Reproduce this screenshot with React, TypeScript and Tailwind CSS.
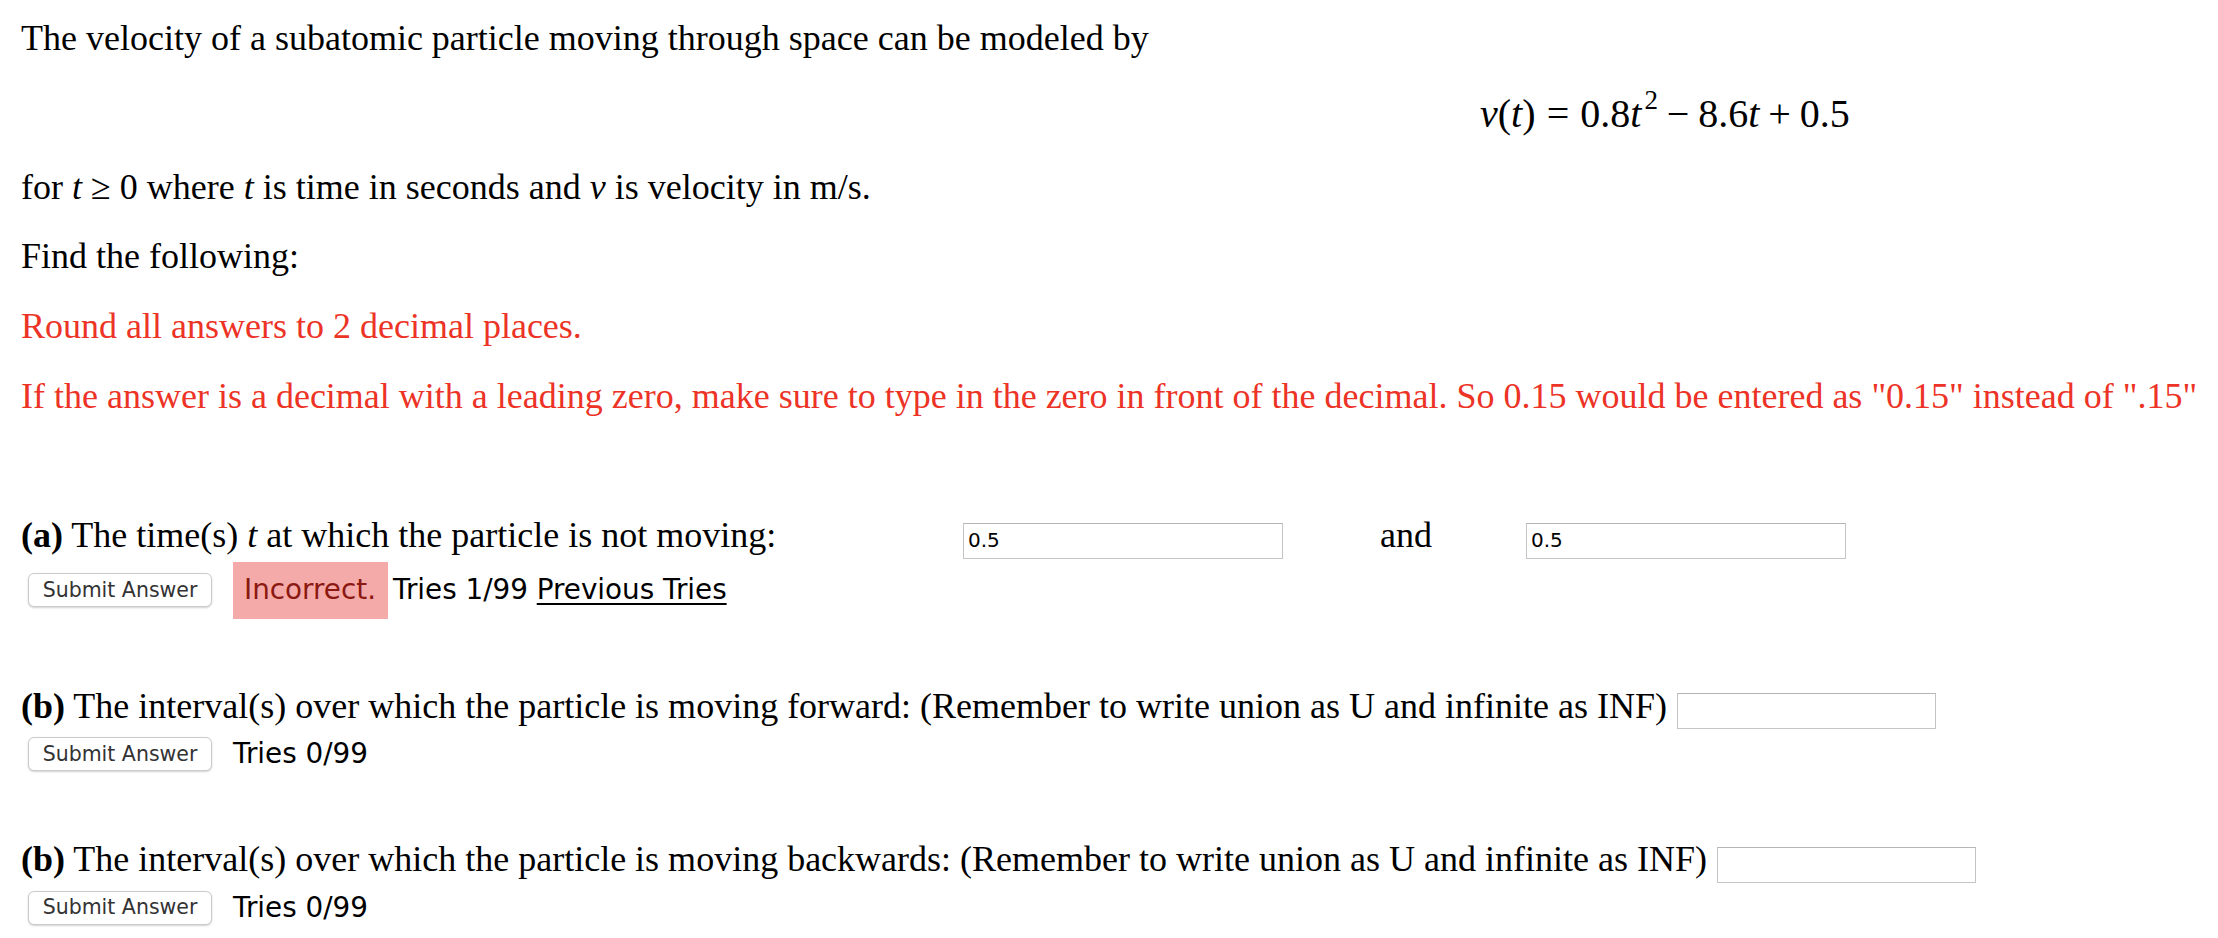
import React from "react";

const serif = "font-['Liberation_Serif','Times_New_Roman',serif]";
const sans = "font-['DejaVu_Sans',Verdana,sans-serif]";

function SubmitButton() {
  return (
    <button
      type="button"
      className={`ml-[7px] w-[184px] h-[34px] shrink-0 rounded-[6px] border border-[#cbcbcb] bg-white shadow-[0_1px_2px_rgba(0,0,0,0.18)] text-[20.5px] text-[#333] flex items-center justify-center ${sans}`}
    >
      Submit Answer
    </button>
  );
}

function AnswerInput({ w, value = "" }: { w: string; value?: string }) {
  return (
    <input
      readOnly
      value={value}
      className={`${w} h-[36px] shrink-0 border border-[#c4c4c4] border-t-[#b5b5b5] bg-white px-[4px] text-[20px] text-black outline-none ${sans}`}
    />
  );
}

export default function App() {
  return (
    <div className={`min-h-[938px] w-[2218px] bg-white text-black pl-[21px] pt-[18px] text-[36px] ${serif}`}>
      <p className="leading-[41px] h-[41px] whitespace-nowrap">
        The velocity of a subatomic particle moving through space can be modeled by
      </p>

      <div className="mt-[32px] h-[45px] leading-[45px] text-[40px] whitespace-nowrap pl-[1459px]">
        <span className="italic">v</span>(<span className="italic">t</span>)
        <span className="mx-[0.2778em]">=</span>
        0.8<span className="italic">t</span>
        <sup className="ml-[3px] text-[27px] -top-[18px]">2</sup>
        <span className="mx-[0.2222em]">−</span>
        8.6<span className="italic">t</span>
        <span className="mx-[0.2222em]">+</span>
        0.5
      </div>

      <p className="mt-[31px] leading-[41px] h-[41px] whitespace-nowrap">
        for <span className="italic">t</span> ≥ 0 where <span className="italic">t</span> is time in seconds and{" "}
        <span className="italic">v</span> is velocity in m/s.
      </p>

      <p className="mt-[28px] leading-[41px] h-[41px] whitespace-nowrap">Find the following:</p>

      <p className="mt-[29px] leading-[41px] h-[41px] whitespace-nowrap text-[#ec3326]">
        Round all answers to 2 decimal places.
      </p>

      <p className="mt-[29px] leading-[41px] h-[41px] whitespace-nowrap text-[#ec3326]">
        If the answer is a decimal with a leading zero, make sure to type in the zero in front of the decimal. So
        0.15 would be entered as "0.15" instead of ".15"
      </p>

      {/* (a) */}
      <div className="mt-[98px] flex items-baseline leading-[41px] whitespace-nowrap">
        <div className="w-[942px] shrink-0">
          <span className="font-bold">(a)</span> The time(s) <span className="italic">t</span> at which the particle
          is not moving:
        </div>
        <AnswerInput w="w-[320px]" value="0.5" />
        <span className="ml-[97px]">and</span>
        <span className="ml-[94px]">
          <AnswerInput w="w-[320px]" value="0.5" />
        </span>
      </div>

      <div className={`mt-[3px] h-[57px] flex items-center text-[27.8px] ${sans}`}>
        <SubmitButton />
        <span className="ml-[21px] h-[57px] flex items-center pl-[11px] pr-[12px] bg-[#f3aaa9] text-[#8c1812]">
          Incorrect.
        </span>
        <span className="ml-[5px] whitespace-nowrap">
          Tries 1/99 <span className="underline underline-offset-[4px]">Previous Tries</span>
        </span>
      </div>

      {/* (b) forward */}
      <div className="mt-[67px] flex items-baseline gap-[10px] leading-[41px] whitespace-nowrap">
        <div>
          <span className="font-bold">(b)</span> The interval(s) over which the particle is moving forward: (Remember
          to write union as U and infinite as INF)
        </div>
        <AnswerInput w="w-[259px]" />
      </div>

      <div className={`mt-[8px] h-[34px] flex items-center text-[27.8px] ${sans}`}>
        <SubmitButton />
        <span className="ml-[21px] whitespace-nowrap">Tries 0/99</span>
      </div>

      {/* (b) backwards */}
      <div className="mt-[68px] flex items-baseline gap-[10px] leading-[41px] whitespace-nowrap">
        <div>
          <span className="font-bold">(b)</span> The interval(s) over which the particle is moving backwards:
          (Remember to write union as U and infinite as INF)
        </div>
        <AnswerInput w="w-[259px]" />
      </div>

      <div className={`mt-[8px] h-[34px] flex items-center text-[27.8px] ${sans}`}>
        <SubmitButton />
        <span className="ml-[21px] whitespace-nowrap">Tries 0/99</span>
      </div>
    </div>
  );
}
